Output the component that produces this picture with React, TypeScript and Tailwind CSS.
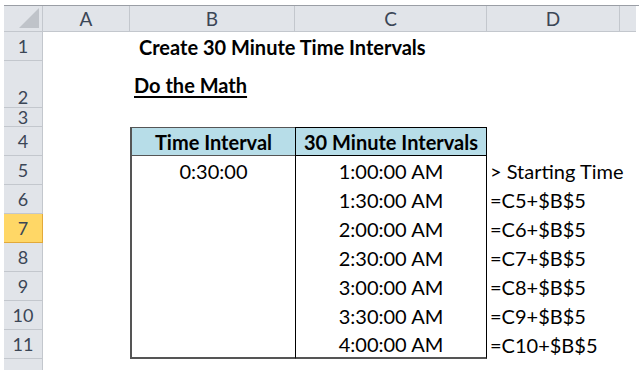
import React from "react";

const cols = [
    { key: "A", w: "w-[87px]" },
    { key: "B", w: "w-[165px]" },
    { key: "C", w: "w-[192px]" },
    { key: "D", w: "w-[133px]" },
];

const data = [
    { row: 5, b: "0:30:00", c: "1:00:00 AM", d: "> Starting Time" },
    { row: 6, b: "", c: "1:30:00 AM", d: "=C5+$B$5" },
    { row: 7, b: "", c: "2:00:00 AM", d: "=C6+$B$5" },
    { row: 8, b: "", c: "2:30:00 AM", d: "=C7+$B$5" },
    { row: 9, b: "", c: "3:00:00 AM", d: "=C8+$B$5" },
    { row: 10, b: "", c: "3:30:00 AM", d: "=C9+$B$5" },
    { row: 11, b: "", c: "4:00:00 AM", d: "=C10+$B$5" },
];

function RowHead({ n, active = false, h, bottom = false }: { n?: number; active?: boolean; h: string; bottom?: boolean }) {
    return (
        <div
            className={`w-[39px] shrink-0 ${h} flex justify-center text-[18px] leading-none text-[#3b4656] border-r border-b ${bottom ? "items-end pb-[1px]" : "items-center"
                } ${active ? "bg-[#ffd766] border-[#e2a93a]" : "bg-[#e1e4e9] border-[#c3c7cd]"}`}
        >
            {n}
        </div>
    );
}

export default function App() {
    return (
        <div className="w-[639px] h-[370px] bg-white overflow-hidden pt-[5px] pl-[4px] font-['Lato',sans-serif] text-black leading-[22px]">
            {/* column headers */}
            <div className="flex h-[27px] border-t border-[#9a9ea5]">
                <div className="w-[39px] shrink-0 bg-[#e1e4e9] border-r border-b border-[#c3c7cd] relative overflow-hidden">
                    <svg className="absolute right-[3px] bottom-[3px]" width="20" height="20" viewBox="0 0 20 20">
                        <polygon points="20,0 20,20 0,20" fill="#bfc3c9" />
                    </svg>
                </div>
                {cols.map((c) => (
                    <div
                        key={c.key}
                        className={`${c.w} shrink-0 bg-[#e1e4e9] border-r border-b border-[#c3c7cd] flex items-center justify-center text-[19px] text-[#3b4656]`}
                    >
                        {c.key}
                    </div>
                ))}
                <div className="w-[16px] shrink-0 bg-[#e1e4e9] border-b border-[#c3c7cd]" />
            </div>

            {/* row 1 */}
            <div className="flex h-[29px]">
                <RowHead n={1} h="h-[29px]" />
                <div className="w-[87px] shrink-0" />
                <div className="flex items-center pl-[9px] whitespace-nowrap text-[20px] font-bold">
                    Create 30 Minute Time Intervals
                </div>
            </div>

            {/* row 2 */}
            <div className="flex h-[47px]">
                <RowHead n={2} h="h-[47px]" bottom />
                <div className="w-[87px] shrink-0" />
                <div className="flex items-end pb-[12px] pl-[4px] whitespace-nowrap text-[20px] font-bold underline underline-offset-[3px]">
                    Do the Math
                </div>
            </div>

            {/* row 3 */}
            <div className="flex h-[19px]">
                <RowHead n={3} h="h-[19px]" />
            </div>

            {/* row 4 table header */}
            <div className="flex h-[29px]">
                <RowHead n={4} h="h-[29px]" />
                <div className="w-[87px] shrink-0" />
                <div className="w-[165px] shrink-0 bg-[#b7dde8] border-t border-b border-l-2 border-[#555] flex items-center justify-center text-[20px] font-bold">
                    Time Interval
                </div>
                <div className="w-[192px] shrink-0 bg-[#b7dde8] border-t border-b border-l border-r border-black flex items-center justify-center text-[20px] font-bold whitespace-nowrap">
                    30 Minute Intervals
                </div>
            </div>

            {/* rows 5 - 11 */}
            {data.map((r) => (
                <div key={r.row} className="flex h-[29px]">
                    <RowHead n={r.row} active={r.row === 7} h="h-[29px]" />
                    <div className="w-[87px] shrink-0" />
                    <div
                        className={`w-[165px] shrink-0 border-l-2 border-[#555] flex items-center justify-center text-[20px] ${r.row === 11 ? "border-b-2" : ""
                            }`}
                    >
                        {r.b}
                    </div>
                    <div
                        className={`w-[192px] shrink-0 border-l border-r border-black flex items-center justify-center text-[20px] ${r.row === 11 ? "border-b-2 border-b-[#555]" : ""
                            }`}
                    >
                        {r.c}
                    </div>
                    <div className="flex items-center pl-[3px] whitespace-nowrap text-[20px]">{r.d}</div>
                </div>
            ))}

            {/* partial row 12 */}
            <div className="flex">
                <RowHead h="h-[20px]" />
            </div>
        </div>
    );
}
